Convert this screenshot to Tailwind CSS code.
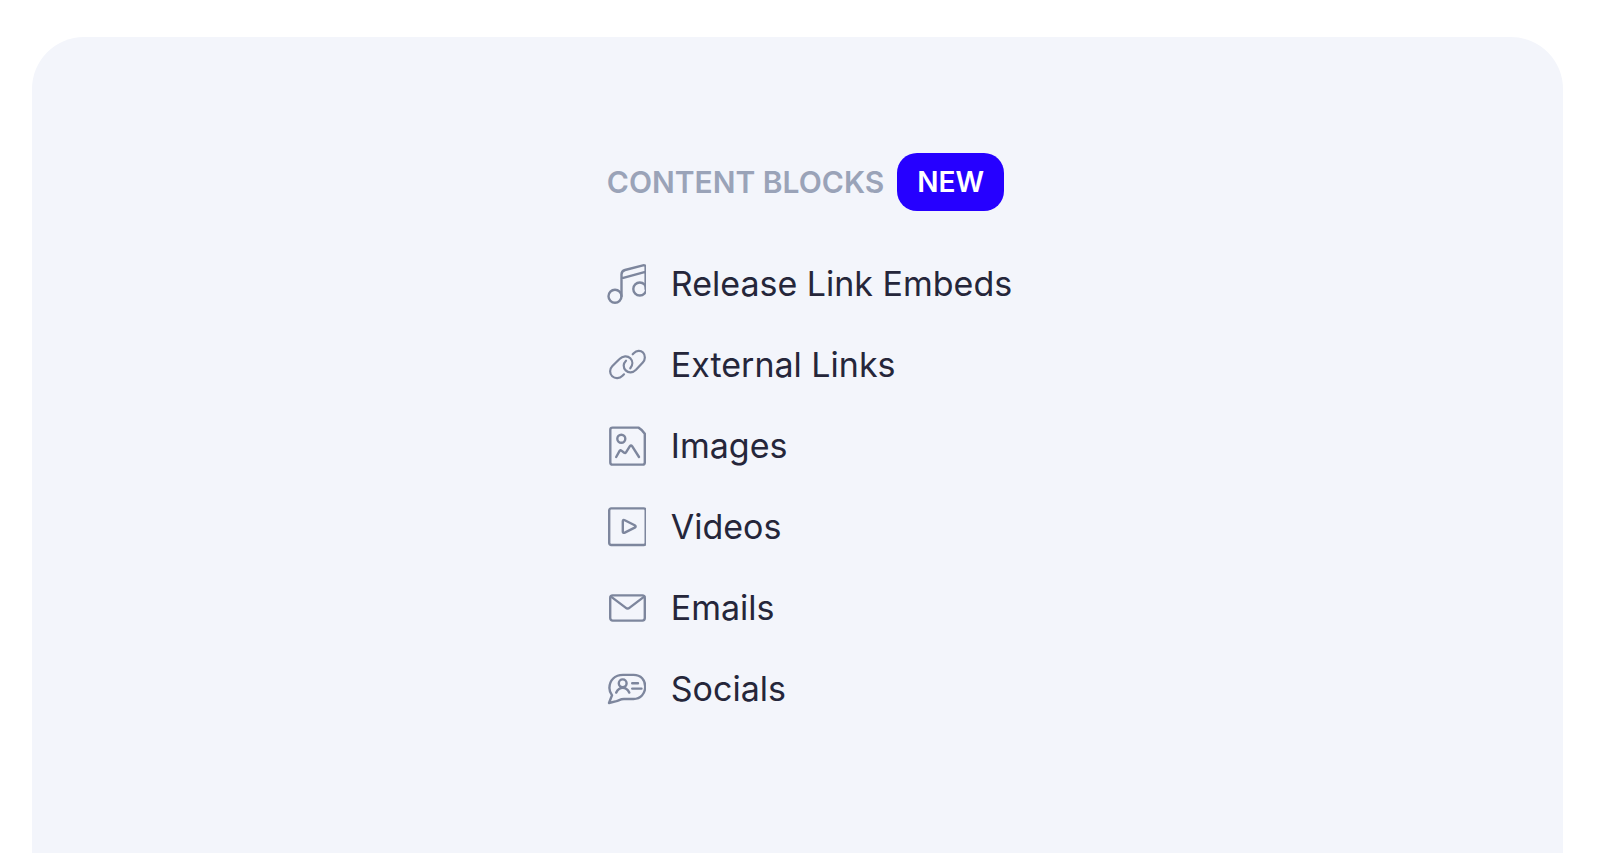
<!DOCTYPE html>
<html lang="en">
	<head>
		<meta charset="UTF-8" />
		<meta name="viewport" content="width=device-width, initial-scale=1.0" />
		<title>Content Blocks</title>
		<!-- Tailwind CSS -->
		<script src="https://cdn.jsdelivr.net/npm/@tailwindcss/browser@4"></script>
	</head>
	<body class="bg-white font-['Inter',sans-serif] text-[#25263a]">
		<main class="flex min-h-screen pt-[37px] pr-[37px] pb-px pl-8">
			<section class="flex grow justify-center rounded-t-[52px] bg-[#f3f5fb] px-4 pt-[116px] pb-16">
				<div class="pl-6">
					<header class="flex items-center gap-[13px]">
						<h1 class="text-[30px] leading-10 font-semibold text-[#9aa3b8]">CONTENT BLOCKS</h1>
						<span class="rounded-[20px] bg-[#2600ff] px-5 py-[9px] text-[28px] leading-10 font-semibold text-white">NEW</span>
					</header>

					<ul class="mt-[53px] flex flex-col gap-[41px] text-[34px] leading-10">
						<!-- Release links -->
						<li class="flex items-center gap-[25px]">
							<svg class="h-10 w-[39px] shrink-0 text-[#7d869d]" viewBox="0 0 39 40" fill="none" stroke="currentColor" stroke-width="2.4" stroke-linecap="round" stroke-linejoin="round" aria-hidden="true">
								<circle cx="8" cy="32.3" r="6.5" />
								<circle cx="32.8" cy="25" r="6.5" />
								<path d="M14.5 32V10.5Q14.5 7 18 6L36 1.4Q38.6 .9 38.6 3V25M14.5 14.3L38.3 7.8" />
							</svg>
							<span>Release Link Embeds</span>
						</li>

						<!-- External links -->
						<li class="flex items-center gap-[25px]">
							<svg class="h-10 w-[39px] shrink-0 text-[#7d869d]" viewBox="0 0 39 40" fill="none" stroke="currentColor" stroke-width="2.2" stroke-linecap="round" stroke-linejoin="round" aria-hidden="true">
								<path d="M17 29.3L15.5 30.8C12.5 33.7 8 33.8 5.2 31.2C2.4 28.5 2.4 24 5.2 21.2L12.5 14C15.7 10.7 20.5 10.4 23.3 13.2C26 15.9 26 20 23.3 23.3" />
								<path d="M25.7 9.3L26.7 8.2C29.7 5.2 33.5 5 36 7.6C38.5 10.3 38.5 14.5 35.8 17.4L29 24.7C25.7 28 21.5 28.2 18.7 25.4C16 22.7 16 18.5 19 15.7" />
							</svg>
							<span>External Links</span>
						</li>

						<!-- Images -->
						<li class="flex items-center gap-[25px]">
							<svg class="h-10 w-[39px] shrink-0 text-[#7d869d]" viewBox="0 0 39 40" fill="none" stroke="currentColor" stroke-width="2.4" stroke-linecap="round" stroke-linejoin="round" aria-hidden="true">
								<path d="M5.5 1.6H31.5Q34.5 3.2 37.8 7.7V36.4Q37.8 38.6 35.6 38.6H5.5Q3.3 38.6 3.3 36.4V3.8Q3.3 1.6 5.5 1.6Z" />
								<circle cx="14.3" cy="12.8" r="4" />
								<path d="M9.2 31L12.6 24.9Q13.3 23.7 14.4 24.6L17.2 26.8Q18.3 27.5 19 26.4L22.9 20.2Q24 18.8 25.1 20.2L32 31" />
							</svg>
							<span>Images</span>
						</li>

						<!-- Videos -->
						<li class="flex items-center gap-[25px]">
							<svg class="h-10 w-[39px] shrink-0 text-[#7d869d]" viewBox="0 0 39 40" fill="none" stroke="currentColor" stroke-width="2.4" stroke-linecap="round" stroke-linejoin="round" aria-hidden="true">
								<rect x="2.2" y="1.4" width="36.5" height="36.6" rx="2" />
								<path d="M15.8 14.4V24.4Q15.8 26.6 17.8 25.6L27.7 20.7Q29.6 19.4 27.7 18.2L17.8 13.2Q15.8 12.2 15.8 14.4Z" />
							</svg>
							<span>Videos</span>
						</li>

						<!-- Emails -->
						<li class="flex items-center gap-[25px]">
							<svg class="h-10 w-[39px] shrink-0 text-[#7d869d]" viewBox="0 0 39 40" fill="none" stroke="currentColor" stroke-width="2.4" stroke-linecap="round" stroke-linejoin="round" aria-hidden="true">
								<rect x="3.2" y="7.4" width="34.6" height="25.2" rx="2.5" />
								<path d="M4 8.6L18.6 19.6Q20.6 21.4 22.7 19.6L37.2 8.6" />
							</svg>
							<span>Emails</span>
						</li>

						<!-- Socials -->
						<li class="flex items-center gap-[25px]">
							<svg class="h-10 w-[39px] shrink-0 text-[#7d869d]" viewBox="0 0 39 40" fill="none" stroke="currentColor" stroke-width="2.4" stroke-linecap="round" stroke-linejoin="round" aria-hidden="true">
								<path d="M2 34L5 26.2C3.2 24.1 2.4 21.6 2.4 19.1C2.4 11.1 8 5.9 16 5.9H26.5C34 5.9 38.2 10.9 38.2 17.6C38.2 24.9 33.5 30 26.5 30H17C13.5 30 12 31.4 9.5 32.2Z" />
								<circle cx="15.7" cy="14.3" r="3.9" />
								<path d="M9.2 23.6C12.5 17.1 19 17.1 22.3 23.6M25.2 14.3H31M25.2 19.6H34.5" />
							</svg>
							<span>Socials</span>
						</li>
					</ul>
				</div>
			</section>
		</main>
	</body>
</html>
